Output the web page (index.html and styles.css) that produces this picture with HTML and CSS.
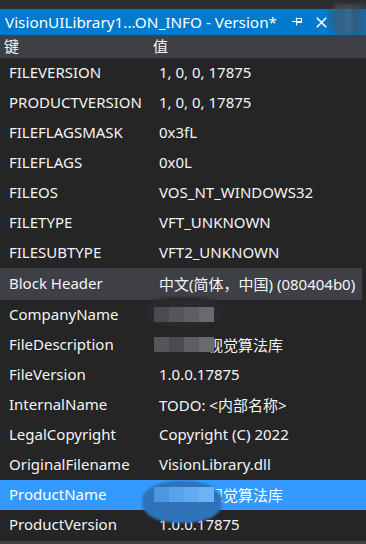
FILE: index.html
```html
<!DOCTYPE html>
<html lang="zh-CN">
<head>
<meta charset="utf-8">
<link rel="stylesheet" href="styles.css">
</head>
<body>
<div class="window">
  <div class="topstrip"></div>
  <div class="tabbar">
    <span class="title">VisionUILibrary1...ON_INFO - Version*</span>
    <span class="tabicons">
      <svg class="pin" width="11" height="9" viewBox="0 0 11 9"><path d="M0 4.5h4.5M4.5 0.5v8M4.5 1.5h5v4h-5" fill="none" stroke="#fff" stroke-width="1.2"/><path d="M4.5 5h5.5" stroke="#fff" stroke-width="2"/></svg>
      <svg class="close" width="11" height="11" viewBox="0 0 11 11"><path d="M0.8 0.8l9.4 9.4M10.2 0.8l-9.4 9.4" stroke="#fff" stroke-width="1.6"/></svg>
    </span>
  </div>
  <div class="blurtab"><i></i><i></i><i></i><i></i></div>
  <div class="grid">
    <div class="row head"><span class="k">键</span><span class="v">值</span></div>
    <div class="row"><span class="k">FILEVERSION</span><span class="v">1, 0, 0, 17875</span></div>
    <div class="row"><span class="k">PRODUCTVERSION</span><span class="v">1, 0, 0, 17875</span></div>
    <div class="row"><span class="k">FILEFLAGSMASK</span><span class="v">0x3fL</span></div>
    <div class="row"><span class="k">FILEFLAGS</span><span class="v">0x0L</span></div>
    <div class="row"><span class="k">FILEOS</span><span class="v">VOS_NT_WINDOWS32</span></div>
    <div class="row"><span class="k">FILETYPE</span><span class="v">VFT_UNKNOWN</span></div>
    <div class="row"><span class="k">FILESUBTYPE</span><span class="v">VFT2_UNKNOWN</span></div>
    <div class="row block"><span class="k">Block Header</span><span class="v">中文(简体，中国) (080404b0)</span></div>
    <div class="row"><span class="k">CompanyName</span><span class="v"><span class="blob dark"></span><span class="mosaic"><i class="m1"></i><i class="m2"></i><i class="m3"></i><i class="m4"></i></span></span></div>
    <div class="row"><span class="k">FileDescription</span><span class="v"><span class="mosaic"><i class="m2"></i><i class="m1"></i><i class="m3"></i><i class="m4"></i></span><span class="cn">视觉算法库</span></span></div>
    <div class="row"><span class="k">FileVersion</span><span class="v">1.0.0.17875</span></div>
    <div class="row"><span class="k">InternalName</span><span class="v">TODO: &lt;内部名称&gt;</span></div>
    <div class="row"><span class="k">LegalCopyright</span><span class="v">Copyright (C) 2022</span></div>
    <div class="row"><span class="k">OriginalFilename</span><span class="v">VisionLibrary.dll</span></div>
    <div class="row sel"><span class="k">ProductName</span><span class="v"><span class="blob blue"></span><span class="mosaic"><i class="b1"></i><i class="b2"></i><i class="b3"></i><i class="b4"></i></span><span class="cn">视觉算法库</span></span></div>
    <div class="row"><span class="k">ProductVersion</span><span class="v">1.0.0.17875</span></div>
  </div>
  <div class="bottom"></div>
</div>
</body>
</html>
```

FILE: styles.css
```css
html, body {
  margin: 0;
  padding: 0;
  background: #252526;
}
body {
  font-family: "Noto Sans", "Noto Sans CJK SC", sans-serif;
  color: #f4f4f4;
  width: 366px;
  height: 544px;
  overflow: hidden;
}
.window {
  position: relative;
  width: 366px;
  height: 544px;
  display: flex;
  flex-direction: column;
}
.topstrip {
  height: 9px;
  background: #2d2d30;
  flex: none;
}
.tabbar {
  height: 26px;
  flex: none;
  background: #007acc;
  display: flex;
  align-items: center;
  padding-left: 5px;
  box-sizing: border-box;
}
.title {
  font-size: 15.3px;
  color: #ffffff;
  white-space: nowrap;
  line-height: 26px;
  width: 287px;
}
.tabicons {
  display: flex;
  align-items: center;
  gap: 13px;
}
.pin { display: block; margin-top: -1px; }
.close { display: block; }
.blurtab {
  position: absolute;
  left: 329px;
  top: 4px;
  width: 40px;
  height: 32px;
  border-radius: 12px 0 0 12px;
  background: rgba(72, 80, 90, 0.45);
  filter: blur(1.5px);
  display: flex;
  padding-left: 6px;
  box-sizing: border-box;
}
.blurtab i {
  display: block;
  width: 11px;
  height: 30px;
}
.blurtab i:nth-child(1) { background: rgba(80, 90, 100, 0.35); }
.blurtab i:nth-child(2) { background: rgba(100, 105, 112, 0.3); }
.blurtab i:nth-child(3) { background: rgba(70, 80, 92, 0.35); }
.grid {
  flex: 1;
  display: flex;
  flex-direction: column;
}
.row {
  display: grid;
  grid-template-columns: 150px 1fr;
  height: 30px;
  align-items: center;
  font-size: 15px;
  white-space: nowrap;
  position: relative;
}
.row > span { position: relative; top: -1px; }
.row .k { padding-left: 9px; }
.row .v { padding-left: 9px; display: flex; align-items: center; }
.row.head {
  height: 23px;
  background: #3f3f46;
  font-family: "Noto Sans CJK SC", sans-serif;
}
.row.head .k { padding-left: 4px; }
.row.head .v { padding-left: 3px; }
.row.block {
  height: 32px;
  background: #3f3f46;
  margin-right: 4px;
}
.row.sel {
  background: #3399ff;
  color: #ffffff;
}
.cn {
  font-family: "Noto Sans CJK SC", sans-serif;
  margin-left: -6px;
}
.mosaic {
  display: flex;
  position: relative;
  z-index: 2;
  margin-left: -5px;
}
.mosaic i {
  display: block;
  width: 15px;
  height: 15px;
}
.m1 { background: #4b4b4f; }
.m2 { background: #56565a; }
.m3 { background: #5e5e62; }
.m4 { background: #6a6a6e; }
.b1 { background: #4d97e0; }
.b2 { background: #5aa3ec; }
.b3 { background: #62abf2; }
.b4 { background: #6cb3f6; }
.blob {
  position: absolute;
  z-index: 1;
  border-radius: 40%;
  filter: blur(1px);
}
.blob.dark {
  left: -6px;
  top: -10px;
  width: 80px;
  height: 30px;
  background: #2a2a2c;
}
.blob.blue {
  left: -8px;
  top: -3px;
  width: 80px;
  height: 42px;
  background: #2f72b8;
  border-radius: 45%;
}
.bottom {
  height: 3px;
  flex: none;
  background: #3f3f46;
}
```
